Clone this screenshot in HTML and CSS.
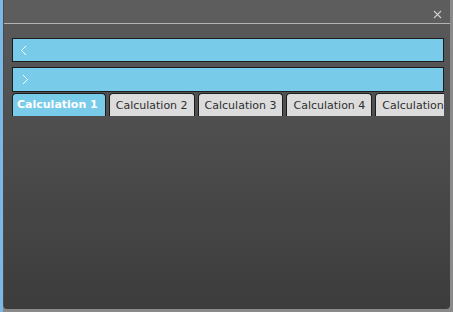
FILE: index.html
```html
<!DOCTYPE html>
<html lang="en">
<head>
  <meta charset="UTF-8">
  <title>Calculations</title>
  <link rel="stylesheet" href="styles.css">
</head>
<body>

  <div class="window">
    <div class="titlebar">
      <span class="title"></span>
      <button class="close" aria-label="Close">
        <svg width="9" height="9" viewBox="0 0 9 9"><path d="M1 1 L8 8 M8 1 L1 8" stroke="#cfcfcf" stroke-width="1.1" fill="none"/></svg>
      </button>
    </div>

    <div class="content">
      <div class="nav-bar">
        <svg width="7" height="11" viewBox="0 0 7 11"><path d="M6 1 L1.5 5.5 L6 10" stroke="#fff" stroke-width="1" fill="none"/></svg>
      </div>
      <div class="nav-bar next">
        <svg width="7" height="11" viewBox="0 0 7 11"><path d="M1 1 L5.5 5.5 L1 10" stroke="#fff" stroke-width="1" fill="none"/></svg>
      </div>

      <div class="tabs">
        <div class="tab active">Calculation 1</div>
        <div class="tab">Calculation 2</div>
        <div class="tab">Calculation 3</div>
        <div class="tab">Calculation 4</div>
        <div class="tab">Calculation 5</div>
      </div>
    </div>
  </div>

</body>
</html>
```

FILE: styles.css
```css
* {
  margin: 0;
  padding: 0;
  box-sizing: border-box;
}

body {
  width: 453px;
  height: 312px;
  overflow: hidden;
  background: linear-gradient(to right, #7bb8e6 3px, #8a8a8a 3px);
  font-family: 'DejaVu Sans', Verdana, sans-serif;
}

.window {
  margin-left: 3px;
  width: 447px;
  height: 309px;
  background: linear-gradient(to bottom, #5b5b5b, #3c3c3c);
  border-radius: 0 0 4px 4px;
  border-left: 1px solid #4a4a4a;
}

.titlebar {
  height: 24px;
  background: #5d5d5d;
  border-bottom: 1px solid #b2b2b2;
  display: flex;
  justify-content: flex-end;
  align-items: center;
  padding: 0 8px 0 0;
}

.close {
  border: none;
  background: none;
  display: flex;
  padding-top: 5px;
}

.content {
  padding: 14px 6px 0 8px;
}

.nav-bar {
  height: 24px;
  background: #79cbea;
  border: 1px solid #1c1c1c;
  display: flex;
  align-items: center;
  padding-left: 7px;
  margin-bottom: 5px;
}

.nav-bar.next {
  padding-left: 9px;
  margin-bottom: 1px;
  height: 25px;
}

.tabs {
  display: flex;
  gap: 3px;
  overflow: hidden;
  height: 23px;
}

.tab {
  flex: none;
  height: 23px;
  padding: 1px 6px 0;
  display: flex;
  align-items: center;
  font-size: 11px;
  color: #2e2e2e;
  background: #dcdcdc;
  border: 1px solid #1c1c1c;
  border-bottom: none;
  border-radius: 4px 4px 0 0;
}

.tab.active {
  padding: 0 7px 2px 4px;
  background: #79cbea;
  color: #fff;
  font-weight: bold;
}
```
